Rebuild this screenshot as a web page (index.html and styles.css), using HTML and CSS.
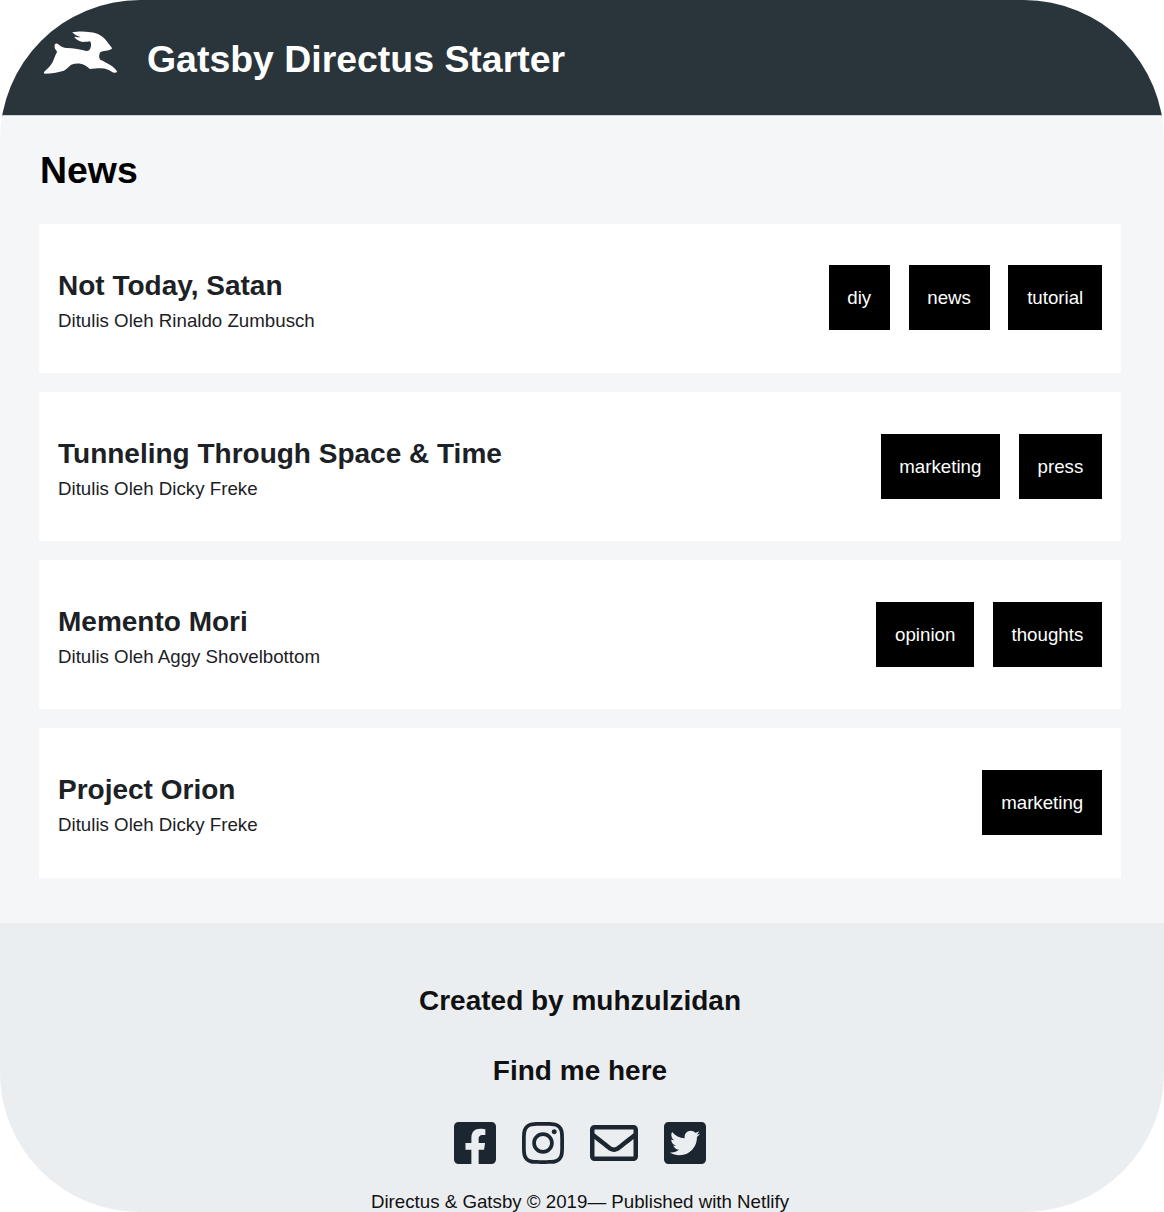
FILE: index.html
```html
<!DOCTYPE html>
<html>
<head>
  <title>Gatsby Directus Starter</title>
  <link rel="stylesheet" href="styles.css">
</head>
<body>
  <div class="page">
    <header class="site-header">
      <svg class="logo" viewBox="125 90 230 135" aria-hidden="true">
        <path fill="#fff" d="M215 97c16-3 38-3 55 0 22 2 38 12 50 28 6 8 12 15 15 20-3 5-12 7-20 7-5 1-12 2-16 5-4 8-4 16 0 22 10 4 20 10 30 16 8 5 17 12 21 20-3 3-10 4-14 2-8-6-20-12-36-12-10 0-22 1-32 2-8-8-16-14-28-16-10-1-20 0-28 3-7 6-14 13-22 18-20 6-38 9-58 9l-2-4c10-10 20-18 26-30 5-10 8-22 14-32-6-6-10-14-7-22 3-4 8-3 12 1 6 5 14 9 24 10 18 1 36 3 50 7 6 2 12 3 17 0 6-8 8-18 3-27-6 1-14 2-22 2-12-2-22-9-26-16 8 1 14 2 20 2-10-4-20-8-26-15z"/>
      </svg>
      <div class="site-title">Gatsby Directus Starter</div>
    </header>

    <main class="content">
      <h1>News</h1>

      <article class="post">
        <div class="post-text">
          <h2>Not Today, Satan</h2>
          <p>Ditulis Oleh Rinaldo Zumbusch</p>
        </div>
        <div class="tags">
          <a class="tag">diy</a>
          <a class="tag">news</a>
          <a class="tag">tutorial</a>
        </div>
      </article>

      <article class="post">
        <div class="post-text">
          <h2>Tunneling Through Space &amp; Time</h2>
          <p>Ditulis Oleh Dicky Freke</p>
        </div>
        <div class="tags">
          <a class="tag">marketing</a>
          <a class="tag">press</a>
        </div>
      </article>

      <article class="post">
        <div class="post-text">
          <h2>Memento Mori</h2>
          <p>Ditulis Oleh Aggy Shovelbottom</p>
        </div>
        <div class="tags">
          <a class="tag">opinion</a>
          <a class="tag">thoughts</a>
        </div>
      </article>

      <article class="post">
        <div class="post-text">
          <h2>Project Orion</h2>
          <p>Ditulis Oleh Dicky Freke</p>
        </div>
        <div class="tags">
          <a class="tag">marketing</a>
        </div>
      </article>
    </main>

    <footer class="site-footer">
      <h3>Created by muhzulzidan</h3>
      <h3>Find me here</h3>
      <div class="socials">
        <svg class="icon-narrow" viewBox="0 0 448 512"><path d="M400 32H48A48 48 0 0 0 0 80v352a48 48 0 0 0 48 48h137.25V327.69h-63V256h63v-54.64c0-62.15 37-96.48 93.67-96.48 27.14 0 55.52 4.84 55.52 4.84v61h-31.27c-30.81 0-40.42 19.12-40.42 38.73V256h68.78l-11 71.69h-57.78V480H400a48 48 0 0 0 48-48V80a48 48 0 0 0-48-48z"/></svg>
        <svg class="icon-narrow" viewBox="0 0 448 512"><path d="M224.1 141c-63.6 0-114.9 51.3-114.9 114.9s51.3 114.9 114.9 114.9S339 319.5 339 255.9 287.7 141 224.1 141zm0 189.6c-41.1 0-74.7-33.5-74.7-74.7s33.5-74.7 74.7-74.7 74.7 33.5 74.7 74.7-33.6 74.7-74.7 74.7zm146.4-194.3c0 14.9-12 26.8-26.8 26.8-14.9 0-26.8-12-26.8-26.8s12-26.8 26.8-26.8 26.8 12 26.8 26.8zm76.1 27.2c-1.7-35.9-9.9-67.7-36.2-93.9-26.2-26.2-58-34.4-93.9-36.2-37-2.1-147.9-2.1-184.9 0-35.8 1.7-67.6 9.9-93.9 36.1s-34.4 58-36.2 93.9c-2.1 37-2.1 147.9 0 184.9 1.7 35.9 9.9 67.7 36.2 93.9s58 34.4 93.9 36.2c37 2.1 147.9 2.1 184.9 0 35.9-1.7 67.7-9.9 93.9-36.2 26.2-26.2 34.4-58 36.2-93.9 2.1-37 2.1-147.8 0-184.8zM398.8 388c-7.8 19.6-22.9 34.7-42.6 42.6-29.5 11.7-99.5 9-132.1 9s-102.7 2.6-132.1-9c-19.6-7.8-34.7-22.9-42.6-42.6-11.7-29.5-9-99.5-9-132.1s-2.6-102.7 9-132.1c7.8-19.6 22.9-34.7 42.6-42.6 29.5-11.7 99.5-9 132.1-9s102.7-2.6 132.1 9c19.6 7.8 34.7 22.9 42.6 42.6 11.7 29.5 9 99.5 9 132.1s2.7 102.7-9 132.1z"/></svg>
        <svg class="icon-wide" viewBox="0 0 512 512"><path d="M464 64H48C21.49 64 0 85.49 0 112v288c0 26.51 21.49 48 48 48h416c26.51 0 48-21.49 48-48V112c0-26.51-21.49-48-48-48zm0 48v40.805c-22.422 18.259-58.168 46.651-134.587 106.49-16.841 13.247-50.201 45.072-73.413 44.701-23.208.375-56.579-31.459-73.413-44.701C106.18 199.465 70.425 171.067 48 152.805V112h416zM48 400V214.398c22.914 18.251 55.409 43.862 104.938 82.646 21.857 17.205 60.134 55.186 103.062 54.955 42.717.231 80.509-37.199 103.053-54.947 49.528-38.783 82.032-64.401 104.947-82.653V400H48z"/></svg>
        <svg class="icon-narrow" viewBox="0 0 448 512"><path d="M400 32H48C21.5 32 0 53.5 0 80v352c0 26.5 21.5 48 48 48h352c26.5 0 48-21.5 48-48V80c0-26.5-21.5-48-48-48zm-48.9 158.8c.2 2.8.2 5.7.2 8.5 0 86.7-66 186.6-186.6 186.6-37.2 0-71.7-10.8-100.7-29.4 5.3.6 10.4.8 15.8.8 30.7 0 58.9-10.4 81.4-28-28.8-.6-53-19.5-61.3-45.5 10.1 1.5 19.2 1.5 29.6-1.2-30-6.1-52.5-32.5-52.5-64.4v-.8c8.7 4.9 18.9 7.9 29.6 8.3a65.447 65.447 0 0 1-29.2-54.6c0-12.2 3.2-23.4 8.9-33.1 32.3 39.8 80.8 65.8 135.2 68.6-9.3-44.5 24-80.6 64-80.6 18.9 0 35.9 7.9 47.9 20.7 14.8-2.8 29-8.3 41.6-15.8-4.9 15.2-15.1 28-28.6 36 13.1-1.4 25.8-5.1 37.6-10.2-8.9 13.1-20.1 24.7-32.9 34z"/></svg>
      </div>
      <p class="credit">Directus &amp; Gatsby © 2019— Published with Netlify</p>
    </footer>
  </div>
</body>
</html>
```

FILE: styles.css
```css
html, body {
  margin: 0;
  padding: 0;
  background: #fff;
}

body {
  font-family: "Liberation Sans", Arial, sans-serif;
  color: #1c2126;
}

.page {
  width: 1164px;
  height: 1212px;
  overflow: hidden;
  border-radius: 140px;
  background: #f5f6f8;
  display: flex;
  flex-direction: column;
}

.site-header {
  height: 115px;
  flex-shrink: 0;
  background: #29343b;
  display: flex;
  align-items: center;
  padding-left: 42px;
  border-bottom: 1px solid #cfd3d6;
  box-sizing: content-box;
}

.logo {
  width: 77px;
  height: 45px;
  margin-top: -10px;
  margin-right: 28px;
}

.site-title {
  color: #fff;
  font-size: 37.44px;
  font-weight: 700;
  margin-top: 4px;
}

.content {
  padding: 0 43px 0 39px;
  height: 807px;
  flex-shrink: 0;
  box-sizing: border-box;
}

.content h1 {
  margin: 33px 0 32.6px 1px;
  font-size: 37.44px;
  line-height: 42px;
  color: #000;
}

.post {
  height: 149.48px;
  margin-bottom: 18.72px;
  padding: 0 19px 1px;
  box-sizing: border-box;
  background: #fff;
  display: flex;
  align-items: center;
  justify-content: space-between;
}

.post-text {
  padding-top: 6px;
}

.post h2 {
  margin: 0 0 6px;
  font-size: 28px;
  line-height: 34px;
}

.post p {
  margin: 0;
  font-size: 18.72px;
  line-height: 24px;
}

.tags {
  display: flex;
  gap: 18.72px;
}

.tag {
  background: #000;
  color: #fff;
  font-size: 18.72px;
  line-height: 65px;
  padding: 0 18.72px;
}

.site-footer {
  flex: 1;
  background: #ebeef1;
  text-align: center;
  padding: 61px 4px 0 0;
  color: #111;
}

.site-footer h3 {
  margin: 0 0 36px;
  font-size: 28px;
  line-height: 34px;
}

.socials {
  display: flex;
  justify-content: center;
  gap: 26px;
  margin-top: -5px;
}

.socials svg {
  height: 48px;
  fill: #1c2630;
}

.icon-narrow {
  width: 42px;
}

.icon-wide {
  width: 48px;
}

.credit {
  margin: 23px 0 0;
  font-size: 18.72px;
  line-height: 24px;
}
```
